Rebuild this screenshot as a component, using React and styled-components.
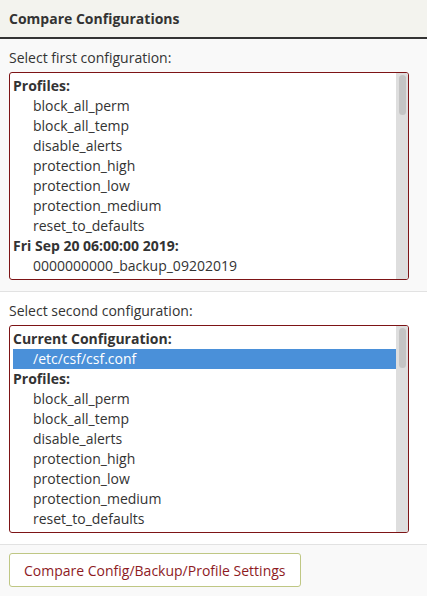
import React from "react";
import styled, { createGlobalStyle } from "styled-components";

const GlobalStyle = createGlobalStyle`
  html, body {
    margin: 0;
    padding: 0;
    background: #ffffff;
  }
  body {
    font-family: "Open Sans", "DejaVu Sans", sans-serif;
    font-size: 14px;
    color: #333;
  }
`;

const Panel = styled.div`
  width: 427px;
`;

const Heading = styled.div`
  height: 37px;
  display: flex;
  align-items: center;
  padding: 0 9px;
  background: #f3f3ee;
  border-bottom: 2px solid #333;
  font-weight: 700;
  font-size: 14px;
  color: #333;
`;

const Row = styled.div`
  padding: ${(p) => (p.$compact ? "8px 9px 10px" : "9px 9px 11px")};
  background: ${(p) => (p.$striped ? "#f9f9f9" : "#ffffff")};
  border-bottom: 1px solid #e2e2e2;
`;

const Label = styled.div`
  line-height: 20px;
  margin-bottom: 4px;
  color: #333;
`;

const ListBox = styled.div`
  box-sizing: border-box;
  width: 400px;
  height: 208px;
  display: flex;
  background: #fff;
  border: 1px solid #7d1416;
  border-radius: 3px;
  overflow: hidden;
`;

const Items = styled.div`
  flex: 1;
  min-width: 0;
  padding: 3px 0 2px 3px;
  overflow: hidden;
`;

const Track = styled.div`
  width: 12px;
  flex: none;
  background: #dedede;
  padding: 2px 2px 0 3px;
  box-sizing: border-box;
`;

const Thumb = styled.div`
  height: 40px;
  border-radius: 4px;
  background: #c4c4c4;
`;

const Group = styled.div`
  line-height: 20px;
  font-weight: 700;
  color: #333;
  white-space: nowrap;
`;

const Option = styled.div`
  line-height: 20px;
  padding-left: 20px;
  white-space: nowrap;
  color: ${(p) => (p.$selected ? "#fff" : "#333")};
  background: ${(p) => (p.$selected ? "#4a90d9" : "transparent")};
`;

const Button = styled.button`
  height: 34px;
  padding: 0 14px;
  background: #fff;
  border: 1px solid #bfc784;
  border-radius: 3px;
  font-family: "Open Sans", "DejaVu Sans", sans-serif;
  font-size: 14px;
  color: #8e1b1f;
  cursor: pointer;
`;

const profiles = [
  "block_all_perm",
  "block_all_temp",
  "disable_alerts",
  "protection_high",
  "protection_low",
  "protection_medium",
  "reset_to_defaults",
];

const backups = [
  { date: "Fri Sep 20 06:00:00 2019:", name: "0000000000_backup_09202019" },
];

const ConfigList = ({ withCurrent }) => (
  <ListBox>
    <Items>
      {withCurrent && (
        <>
          <Group>Current Configuration:</Group>
          <Option $selected>/etc/csf/csf.conf</Option>
        </>
      )}
      <Group>Profiles:</Group>
      {profiles.map((p) => (
        <Option key={p}>{p}</Option>
      ))}
      {!withCurrent &&
        backups.map((b) => (
          <React.Fragment key={b.name}>
            <Group>{b.date}</Group>
            <Option>{b.name}</Option>
          </React.Fragment>
        ))}
    </Items>
    <Track>
      <Thumb />
    </Track>
  </ListBox>
);

export default function App() {
  return (
    <Panel>
      <GlobalStyle />
      <Heading>Compare Configurations</Heading>
      <Row $striped>
        <Label>Select first configuration:</Label>
        <ConfigList />
      </Row>
      <Row>
        <Label>Select second configuration:</Label>
        <ConfigList withCurrent />
      </Row>
      <Row $striped $compact>
        <Button>Compare Config/Backup/Profile Settings</Button>
      </Row>
    </Panel>
  );
}
